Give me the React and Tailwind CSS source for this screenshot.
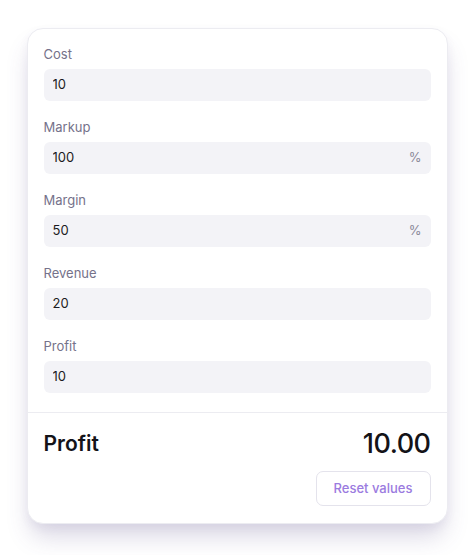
import React, { useState } from "react";

const fields = [
  { key: "cost", label: "Cost", value: "10" },
  { key: "markup", label: "Markup", value: "100", suffix: "%" },
  { key: "margin", label: "Margin", value: "50", suffix: "%" },
  { key: "revenue", label: "Revenue", value: "20" },
  { key: "profit", label: "Profit", value: "10" },
];

const App = () => {
  const [values, setValues] = useState(
    Object.fromEntries(fields.map((f) => [f.key, f.value]))
  );

  return (
    <div
      className="min-h-[555px] bg-white pt-[28px]"
      style={{ fontFamily: "Inter, 'Noto Sans', sans-serif" }}
    >
      <div className="mx-auto w-[421px] rounded-[16px] bg-white border border-[#ececf1] shadow-[0_16px_24px_-4px_rgba(80,70,130,0.22),0_4px_10px_rgba(80,70,130,0.06)]">
        <div className="px-[16px] pt-[15px] pb-[19px]">
          {fields.map((f, i) => (
            <div key={f.key} className={i < fields.length - 1 ? "mb-[16px]" : ""}>
              <label className="block h-[20px] text-[13px] leading-[20px] text-[#75728a] mb-[5px]">
                {f.label}
              </label>
              <div className="flex items-center h-[32px] rounded-[6px] bg-[#f3f3f7] px-[9px]">
                <input
                  className="flex-1 bg-transparent outline-none text-[13px] text-[#1c1b22]"
                  value={values[f.key]}
                  onChange={(e) => setValues({ ...values, [f.key]: e.target.value })}
                />
                {f.suffix && <span className="text-[13px] text-[#8a8898]">{f.suffix}</span>}
              </div>
            </div>
          ))}
        </div>
        <div className="border-t border-[#ececf1] px-[16px] pt-[16px] pb-[17px]">
          <div className="flex items-center justify-between h-[30px]">
            <span className="text-[21px] font-semibold text-[#141318]">Profit</span>
            <span className="text-[27px] font-medium text-[#141318] tracking-[-0.5px]">10.00</span>
          </div>
          <div className="flex justify-end mt-[12px]">
            <button className="h-[35px] w-[115px] rounded-[7px] border border-[#e4e3ec] bg-white text-[13px] font-medium text-[#9b7be0]">
              Reset values
            </button>
          </div>
        </div>
      </div>
    </div>
  );
};

export default App;
